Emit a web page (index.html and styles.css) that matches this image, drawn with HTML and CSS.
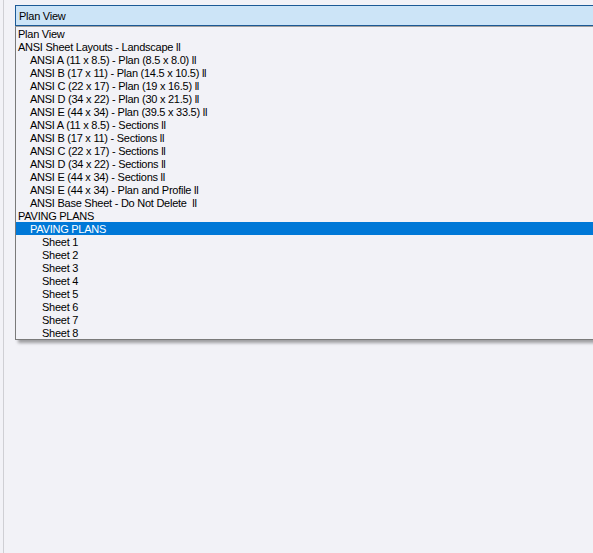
FILE: index.html
```html
<!DOCTYPE html>
<html>
<head>
<meta charset="utf-8">
<link rel="stylesheet" href="styles.css">
</head>
<body>
<div class="page">
  <div class="strip"></div>
  <div class="main">
    <div class="combo">Plan View</div>
    <ul class="list">
      <li class="l0">Plan View</li>
      <li class="l0">ANSI Sheet Layouts - Landscape ll</li>
      <li class="l1">ANSI A (11 x 8.5) - Plan (8.5 x 8.0) ll</li>
      <li class="l1">ANSI B (17 x 11) - Plan (14.5 x 10.5) ll</li>
      <li class="l1">ANSI C (22 x 17) - Plan (19 x 16.5) ll</li>
      <li class="l1">ANSI D (34 x 22) - Plan (30 x 21.5) ll</li>
      <li class="l1">ANSI E (44 x 34) - Plan (39.5 x 33.5) ll</li>
      <li class="l1">ANSI A (11 x 8.5) - Sections ll</li>
      <li class="l1">ANSI B (17 x 11) - Sections ll</li>
      <li class="l1">ANSI C (22 x 17) - Sections ll</li>
      <li class="l1">ANSI D (34 x 22) - Sections ll</li>
      <li class="l1">ANSI E (44 x 34) - Sections ll</li>
      <li class="l1">ANSI E (44 x 34) - Plan and Profile ll</li>
      <li class="l1">ANSI Base Sheet - Do Not Delete&nbsp; ll</li>
      <li class="l0">PAVING PLANS</li>
      <li class="l1 selected">PAVING PLANS</li>
      <li class="l2">Sheet 1</li>
      <li class="l2">Sheet 2</li>
      <li class="l2">Sheet 3</li>
      <li class="l2">Sheet 4</li>
      <li class="l2">Sheet 5</li>
      <li class="l2">Sheet 6</li>
      <li class="l2">Sheet 7</li>
      <li class="l2">Sheet 8</li>
    </ul>
  </div>
</div>
</body>
</html>
```

FILE: styles.css
```css
html, body {
  margin: 0;
  padding: 0;
  height: 100%;
  overflow: hidden;
  background: #f2f2f7;
}
.page {
  display: flex;
  height: 553px;
  font-family: "Liberation Sans", Arial, sans-serif;
  font-size: 11px;
  letter-spacing: -0.25px;
  color: #000;
}
.strip {
  width: 3px;
  flex: none;
  border-right: 1px solid #cfcfd4;
}
.main {
  flex: 1;
  min-width: 0;
  overflow: hidden;
  padding-left: 11px;
  padding-top: 5px;
}
.combo {
  height: 19px;
  line-height: 20px;
  border: 1px solid #1c5a96;
  background: #cce4f7;
  padding-left: 3px;
  margin-right: -10px;
}
.list {
  list-style: none;
  margin: 0 -10px 0 0;
  padding: 0;
  border: 1px solid #7a7a7a;
  border-top-color: #a0a0a0;
  background: #f2f2f7;
  box-shadow: 3px 3px 3px rgba(0, 0, 0, 0.35);
}
.list li {
  height: 13px;
  line-height: 14px;
  white-space: nowrap;
}
.l0 { padding-left: 2px; }
.l1 { padding-left: 14px; }
.l2 { padding-left: 26px; }
.selected {
  background: #0078d7;
  color: #fff;
}
```
